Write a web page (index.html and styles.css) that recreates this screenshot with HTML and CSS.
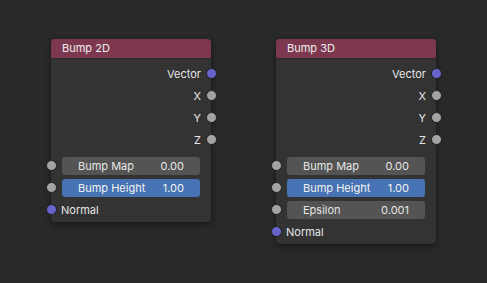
FILE: index.html
```html
<!DOCTYPE html>
<html>
<head>
<meta charset="utf-8">
<link rel="stylesheet" href="styles.css">
</head>
<body>
<div class="canvas">
  <div class="node node-a">
    <div class="header">Bump 2D</div>
    <div class="content">
      <div class="row out"><span>Vector</span><i class="sock right blue"></i></div>
      <div class="row out"><span>X</span><i class="sock right"></i></div>
      <div class="row out"><span>Y</span><i class="sock right"></i></div>
      <div class="row out"><span>Z</span><i class="sock right"></i></div>
      <div class="inputs">
        <div class="row in"><i class="sock left"></i><div class="field"><span>Bump Map</span><span>0.00</span></div></div>
        <div class="row in"><i class="sock left"></i><div class="field active"><span>Bump Height</span><span>1.00</span></div></div>
        <div class="row in plain"><i class="sock left blue"></i><span>Normal</span></div>
      </div>
    </div>
  </div>
  <div class="node node-b">
    <div class="header">Bump 3D</div>
    <div class="content">
      <div class="row out"><span>Vector</span><i class="sock right blue"></i></div>
      <div class="row out"><span>X</span><i class="sock right"></i></div>
      <div class="row out"><span>Y</span><i class="sock right"></i></div>
      <div class="row out"><span>Z</span><i class="sock right"></i></div>
      <div class="inputs">
        <div class="row in"><i class="sock left"></i><div class="field"><span>Bump Map</span><span>0.00</span></div></div>
        <div class="row in"><i class="sock left"></i><div class="field active"><span>Bump Height</span><span>1.00</span></div></div>
        <div class="row in"><i class="sock left"></i><div class="field"><span>Epsilon</span><span>0.001</span></div></div>
        <div class="row in plain"><i class="sock left blue"></i><span>Normal</span></div>
      </div>
    </div>
  </div>
</div>
</body>
</html>
```
FILE: styles.css
```css
html, body {
  margin: 0;
  padding: 0;
  background: #292929;
}
.canvas {
  position: relative;
  width: 487px;
  height: 283px;
  overflow: hidden;
  background: #292929;
  font-family: Inter, "DejaVu Sans", sans-serif;
  font-size: 11px;
  color: #e6e6e6;
}
.node {
  position: absolute;
  top: 39px;
  width: 160px;
  background: #333333;
  border-radius: 4px;
  box-shadow: 0 2px 6px rgba(0,0,0,0.45);
}
.node-a { left: 51px; }
.node-b { left: 276px; }
.header {
  height: 19px;
  line-height: 19px;
  padding-left: 11px;
  background: #7d3850;
  border-radius: 4px 4px 0 0;
  border-bottom: 1px solid #2a2a2a;
  color: #eeeeee;
}
.content {
  padding: 4px 0 1px 0;
}
.row {
  position: relative;
  height: 22px;
  display: flex;
  align-items: center;
}
.row.out {
  justify-content: flex-end;
  padding-right: 10px;
}
.inputs {
  margin-top: 4px;
}
.row.in {
  padding: 0 11px;
}
.row.plain {
  padding-left: 10px;
}
.field {
  flex: 1;
  height: 18px;
  border-radius: 3px;
  background: #545454;
  display: flex;
  justify-content: space-between;
  align-items: center;
  padding: 0 16px;
  color: #e6e6e6;
}
.field.active {
  background: #4772b3;
  color: #f2f2f2;
}
.sock {
  position: absolute;
  top: 5px;
  width: 9px;
  height: 9px;
  border-radius: 50%;
  background: #a3a3a3;
  border: 1px solid #1e1e1e;
}
.sock.right { right: -6px; }
.sock.left { left: -5px; }
.sock.blue { background: #6464cc; }
```
